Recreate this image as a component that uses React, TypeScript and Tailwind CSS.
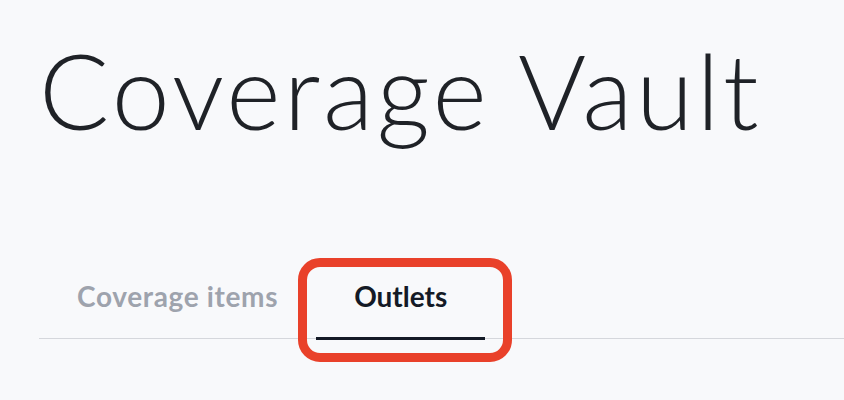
export default function App() {
  return (
    <div className="min-h-[400px] w-full overflow-hidden bg-[#f8f9fb] pl-[39px] font-['Lato','Liberation_Sans',sans-serif]">
      {/* Page title */}
      <h1 className="pt-[38px] text-[104px] font-light leading-none tracking-[3.4px] whitespace-nowrap text-[#1f2227]">
        Coverage Vault
      </h1>

      {/* Tabs */}
      <div className="mt-[137px] flex border-b border-[#d5d7dc]">
        <button className="-mb-[2px] border-b-[3px] border-transparent px-[38px] pb-[24px] text-[28px] leading-[34px] font-bold tracking-[0.65px] whitespace-nowrap text-[#9ea3ad]">
          Coverage items
        </button>
        <div className="relative -mb-[2px]">
          <button className="border-b-[3px] border-[#141a26] px-[38px] pb-[24px] text-[28px] leading-[34px] font-bold whitespace-nowrap text-[#141a26]">
            Outlets
          </button>
          {/* highlight annotation */}
          <div className="pointer-events-none absolute -top-[21px] -right-[27px] -bottom-[22px] -left-[18px] rounded-[22px] border-[9px] border-[#e9412a]" />
        </div>
      </div>
    </div>
  );
}
